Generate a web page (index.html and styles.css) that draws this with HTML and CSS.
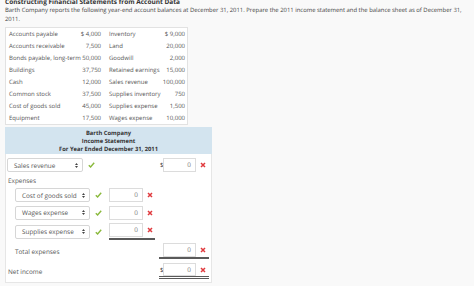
FILE: index.html
```html
<!DOCTYPE html>
<html>
<head>
<meta charset="utf-8">
<link rel="stylesheet" href="styles.css">
</head>
<body>
<div class="page">
  <h1 class="title">Constructing Financial Statements from Account Data</h1>
  <p class="intro">Barth Company reports the following year-end account balances at December 31, 2011. Prepare the 2011 income statement and the balance sheet as of December 31, 2011.</p>

  <div class="accounts">
    <div class="acct-row"><span class="c1">Accounts payable</span><span class="c2">$ 4,000</span><span class="c3">Inventory</span><span class="c4">$ 9,000</span></div>
    <div class="acct-row"><span class="c1">Accounts receivable</span><span class="c2">7,500</span><span class="c3">Land</span><span class="c4">20,000</span></div>
    <div class="acct-row"><span class="c1">Bonds payable, long-term</span><span class="c2">50,000</span><span class="c3">Goodwill</span><span class="c4">2,000</span></div>
    <div class="acct-row"><span class="c1">Buildings</span><span class="c2">37,750</span><span class="c3">Retained earnings</span><span class="c4">15,000</span></div>
    <div class="acct-row"><span class="c1">Cash</span><span class="c2">12,000</span><span class="c3">Sales revenue</span><span class="c4">100,000</span></div>
    <div class="acct-row"><span class="c1">Common stock</span><span class="c2">37,500</span><span class="c3">Supplies inventory</span><span class="c4">750</span></div>
    <div class="acct-row"><span class="c1">Cost of goods sold</span><span class="c2">45,000</span><span class="c3">Supplies expense</span><span class="c4">1,500</span></div>
    <div class="acct-row"><span class="c1">Equipment</span><span class="c2">17,500</span><span class="c3">Wages expense</span><span class="c4">10,000</span></div>
  </div>

  <div class="panel">
    <div class="panel-head">
      <div>Barth Company</div>
      <div>Income Statement</div>
      <div>For Year Ended December 31, 2011</div>
    </div>

    <div class="row row-main">
      <div class="select sel-main"><span>Sales revenue</span><svg class="arrows" width="3" height="5" viewBox="0 0 3 5"><path d="M1.5 0L3 2H0Z M1.5 5L3 3H0Z" fill="#444"/></svg></div>
      <svg class="check" width="7" height="6" viewBox="0 0 7 6"><path d="M0.8 3.2L2.6 5L6.2 0.8" fill="none" stroke="#8ab93c" stroke-width="1.4"/></svg>
      <div class="spacer"></div>
      <div class="amount">
        <span class="dollar">$</span><div class="input">0</div><svg class="cross" width="6" height="6" viewBox="0 0 6 6"><path d="M1 1L5 5M5 1L1 5" stroke="#e03a3e" stroke-width="1.5"/></svg>
      </div>
    </div>

    <div class="label">Expenses</div>

    <div class="row row-exp first">
      <div class="select sel-exp"><span>Cost of goods sold</span><svg class="arrows" width="3" height="5" viewBox="0 0 3 5"><path d="M1.5 0L3 2H0Z M1.5 5L3 3H0Z" fill="#444"/></svg></div>
      <svg class="check" width="7" height="6" viewBox="0 0 7 6"><path d="M0.8 3.2L2.6 5L6.2 0.8" fill="none" stroke="#8ab93c" stroke-width="1.4"/></svg>
      <div class="sub"><div class="input input-exp">0</div><svg class="cross" width="6" height="6" viewBox="0 0 6 6"><path d="M1 1L5 5M5 1L1 5" stroke="#e03a3e" stroke-width="1.5"/></svg></div>
    </div>
    <div class="row row-exp">
      <div class="select sel-exp"><span>Wages expense</span><svg class="arrows" width="3" height="5" viewBox="0 0 3 5"><path d="M1.5 0L3 2H0Z M1.5 5L3 3H0Z" fill="#444"/></svg></div>
      <svg class="check" width="7" height="6" viewBox="0 0 7 6"><path d="M0.8 3.2L2.6 5L6.2 0.8" fill="none" stroke="#8ab93c" stroke-width="1.4"/></svg>
      <div class="sub"><div class="input input-exp">0</div><svg class="cross" width="6" height="6" viewBox="0 0 6 6"><path d="M1 1L5 5M5 1L1 5" stroke="#e03a3e" stroke-width="1.5"/></svg></div>
    </div>
    <div class="row row-exp">
      <div class="select sel-exp"><span>Supplies expense</span><svg class="arrows" width="3" height="5" viewBox="0 0 3 5"><path d="M1.5 0L3 2H0Z M1.5 5L3 3H0Z" fill="#444"/></svg></div>
      <svg class="check" width="7" height="6" viewBox="0 0 7 6"><path d="M0.8 3.2L2.6 5L6.2 0.8" fill="none" stroke="#8ab93c" stroke-width="1.4"/></svg>
      <div class="sub underline"><div class="input input-exp">0</div><svg class="cross" width="6" height="6" viewBox="0 0 6 6"><path d="M1 1L5 5M5 1L1 5" stroke="#e03a3e" stroke-width="1.5"/></svg></div>
    </div>

    <div class="row row-total">
      <div class="row-label indent">Total expenses</div>
      <div class="spacer"></div>
      <div class="amount underline">
        <span class="dollar"></span><div class="input">0</div><svg class="cross" width="6" height="6" viewBox="0 0 6 6"><path d="M1 1L5 5M5 1L1 5" stroke="#e03a3e" stroke-width="1.5"/></svg>
      </div>
    </div>

    <div class="row row-net">
      <div class="row-label">Net income</div>
      <div class="spacer"></div>
      <div class="amount double">
        <span class="dollar">$</span><div class="input">0</div><svg class="cross" width="6" height="6" viewBox="0 0 6 6"><path d="M1 1L5 5M5 1L1 5" stroke="#e03a3e" stroke-width="1.5"/></svg>
      </div>
    </div>
  </div>
</div>
</body>
</html>
```
FILE: styles.css
```css
* { box-sizing: border-box; }
html, body {
  margin: 0;
  padding: 0;
  background: #f9f9f9;
}
body {
  font-family: "Open Sans", "Noto Sans", sans-serif;
  font-size: 6.2px;
  color: #333;
  text-rendering: geometricPrecision;
}
.page {
  padding: 0 5px;
  margin-top: -3px;
}
.title {
  font-size: 6.5px;
  font-weight: 700;
  line-height: 9px;
  margin: 0;
  color: #333;
}
.intro {
  margin: 0;
  font-size: 5.9px;
  line-height: 8.5px;
  color: #444;
}
.accounts {
  margin-top: 4px;
  width: 183px;
  background: #fff;
  border: 1px solid #e2e2e2;
  font-size: 6px;
}
.acct-row {
  display: grid;
  grid-template-columns: 74px 23px 58px 26px;
  height: 12px;
  align-items: center;
  color: #555;
}
.c1 { padding-left: 3px; white-space: nowrap; }
.c2 { text-align: right; padding-right: 2px; white-space: nowrap; }
.c3 { padding-left: 6px; white-space: nowrap; }
.c4 { text-align: right; padding-right: 2px; white-space: nowrap; }

.panel {
  margin-top: 2px;
  width: 207px;
  background: #fff;
  border: 1px solid #e6e6e6;
  border-top: none;
  padding-bottom: 3px;
  font-size: 6.4px;
}
.panel-head {
  background: #d3e4ef;
  margin: 0 -1px;
  padding: 2px 0 1px;
  text-align: center;
  font-weight: 700;
  font-size: 5.8px;
  line-height: 8px;
  color: #333;
}
.row {
  display: flex;
  align-items: center;
  padding-right: 2px;
}
.spacer { flex: 1; }
.select {
  height: 14px;
  border: 1px solid #d6d6d6;
  border-radius: 2px;
  background: #fff;
  display: flex;
  align-items: center;
  justify-content: space-between;
  padding: 0 4px 0 6px;
  color: #555;
  white-space: nowrap;
}
.sel-main { width: 76px; margin-left: 1px; }
.sel-exp { width: 75px; margin-left: 9px; }
.check { margin-left: 5px; flex: none; }
.row-main { margin-top: 4px; }
.label {
  margin-top: 5px;
  padding-left: 2px;
  line-height: 8px;
  color: #555;
}
.row-exp { margin-top: 3.5px; }
.row-exp.first { margin-top: 3px; }
.sub {
  display: flex;
  align-items: center;
  margin-left: 7px;
  padding-right: 2px;
}
.sub.underline { border-bottom: 2px solid #5a5a5a; padding-bottom: 1px; }
.input {
  height: 14px;
  width: 33px;
  border: 1px solid #dcdcdc;
  background: #fff;
  text-align: right;
  padding-right: 4px;
  line-height: 12px;
  color: #777;
}
.input-exp { width: 34px; }
.cross { margin-left: 4px; flex: none; }
.amount {
  display: flex;
  align-items: center;
  padding: 0 3px 0 1px;
}
.amount.underline { border-bottom: 2px solid #5a5a5a; }
.amount.double { border-bottom: 3px double #5a5a5a; }
.dollar {
  width: 3px;
  color: #333;
  font-size: 6px;
}
.row-total { margin-top: 3px; }
.row-net { margin-top: 4px; }
.row-net .input { height: 13px; }
.row-label { padding-left: 2px; color: #555; }
.row-label.indent { padding-left: 9px; }
```
